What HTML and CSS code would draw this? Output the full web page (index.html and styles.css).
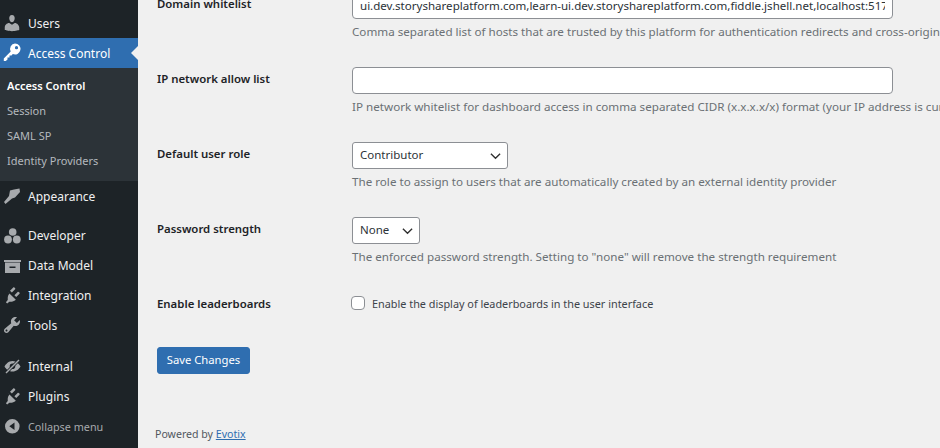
FILE: index.html
```html
<!DOCTYPE html>
<html lang="en">
<head>
<meta charset="utf-8">
<title>Access Control</title>
<link rel="stylesheet" href="styles.css">
</head>
<body>
<div class="app">
  <nav class="sidebar">
    <ul class="menu">
      <li class="item"><svg class="ico" viewBox="0 0 20 20"><path d="M10 9.250c-2.270 0-2.730-3.440-2.730-3.440C7 4.020 7.820 2 9.970 2c2.160 0 2.980 2.020 2.710 3.810 0 0-.41 3.440-2.680 3.440zm0 2.570L12.720 10c2.390 0 4.520 2.330 4.520 4.530v2.490s-3.650 1.130-7.240 1.130c-3.650 0-7.240-1.130-7.240-1.130v-2.490c0-2.250 1.940-4.480 4.470-4.480z"/></svg><span>Users</span></li>
      <li class="item current"><svg class="ico" viewBox="0 0 20 20"><path fill-rule="evenodd" d="M13 .5a5.500 5.500 0 1 1-2.200 10.540L9.500 12.400H7.500v2h-2v2L3.800 18H1.800v-2.600l6.900-6.900A5.500 5.500 0 0 1 13 .5zm1.500 2.600a1.600 1.600 0 1 0 0 3.200 1.600 1.600 0 0 0 0-3.200z"/></svg><span>Access Control</span></li>
      <li class="sub">
        <a class="sub-link active">Access Control</a>
        <a class="sub-link">Session</a>
        <a class="sub-link">SAML SP</a>
        <a class="sub-link">Identity Providers</a>
      </li>
      <li class="item"><svg class="ico" viewBox="0 0 20 20"><path d="M8 4.500 12 3.500l5.500-1 .5 3.500-5 5.500-3 1-6.500 5.500L2 16l5-6z"/></svg><span>Appearance</span></li>
      <li class="sep sep-first"></li>
      <li class="item"><svg class="ico" viewBox="0 0 20 20"><circle cx="10.700" cy="7" r="3.800"/><circle cx="6" cy="14.500" r="3.900"/><circle cx="14.800" cy="14.500" r="3.900"/></svg><span>Developer</span></li>
      <li class="item"><svg class="ico" viewBox="0 0 20 20"><path fill-rule="evenodd" d="M2 5h17v2H2zM3 7.500h15V18H3zM7.500 11.500V13h6v-1.500z"/></svg><span>Data Model</span></li>
      <li class="item"><svg class="ico" viewBox="0 0 20 20"><path d="M13.110 4.360 9.870 7.600 8 5.730l3.240-3.240c.35-.34 1.050-.2 1.560.32.520.51.660 1.210.31 1.550zm-8 1.770 8.740 8.740c-1.160 1.140-2.900 1.810-4.280 1.810H7.320l-2.120 1.860-1.310-1.310 1.850-2.130v-2.240c0-1.390.670-3.130 1.810-4.290zM17.510 8.760l-3.240 3.240-1.870-1.870 3.240-3.240c.34-.35 1.040-.21 1.550.31.520.51.660 1.210.32 1.560z"/></svg><span>Integration</span></li>
      <li class="item"><svg class="ico" viewBox="0 0 20 20"><path d="M16.680 9.770c-1.340 1.340-3.300 1.670-4.950.99l-5.410 6.520c-.99.990-2.590.99-3.580 0s-.99-2.590 0-3.570l6.520-5.420c-.68-1.650-.35-3.610.99-4.950 1.280-1.280 3.120-1.620 4.720-1.060l-2.890 2.890 2.820 2.820 2.860-2.870c.53 1.590.19 3.400-1.080 4.650zM3.810 16.210c.4.390 1.030.39 1.420 0 .4-.4.400-1.030 0-1.430-.39-.39-1.020-.39-1.420 0a1.010 1.010 0 0 0 0 1.430z"/></svg><span>Tools</span></li>
      <li class="sep sep-second"></li>
      <li class="item"><svg class="ico" viewBox="0 0 20 20"><path fill-rule="evenodd" d="M10.500 5C6.500 5 4 8 2.500 10.500 4 13 6.500 15.500 10.500 15.500s6.500-2.500 8-5C17 8 14.500 5 10.500 5zm0 2.500a2.800 2.800 0 1 1 0 5.600 2.800 2.800 0 0 1 0-5.600z"/><path class="slash-gap" d="M4 17 17 4"/><path class="slash" d="M4 17 17 4"/></svg><span>Internal</span></li>
      <li class="item"><svg class="ico" viewBox="0 0 20 20"><path d="M13.110 4.360 9.870 7.600 8 5.730l3.240-3.240c.35-.34 1.050-.2 1.560.32.520.51.660 1.210.31 1.550zm-8 1.770 8.740 8.740c-1.160 1.140-2.900 1.810-4.280 1.810H7.320l-2.120 1.860-1.310-1.310 1.850-2.130v-2.240c0-1.390.670-3.130 1.810-4.290zM17.510 8.760l-3.240 3.240-1.870-1.870 3.240-3.240c.34-.35 1.040-.21 1.550.31.520.51.660 1.210.32 1.560z"/></svg><span>Plugins</span></li>
      <li class="item collapse"><svg class="ico" viewBox="0 0 20 20"><path fill-rule="evenodd" d="M10.300 3a7.300 7.300 0 1 1 0 14.600 7.300 7.300 0 0 1 0-14.600zM12.500 6.500l-5.200 3.800 5.200 3.800z"/></svg><span>Collapse menu</span></li>
    </ul>
  </nav>
  <main class="content">
    <div class="form">
      <div class="row">
        <div class="label">Domain whitelist</div>
        <div class="field">
          <input class="text" type="text" value="ui.dev.storyshareplatform.com,learn-ui.dev.storyshareplatform.com,fiddle.jshell.net,localhost:5173">
          <p class="desc">Comma separated list of hosts that are trusted by this platform for authentication redirects and cross-origin requests</p>
        </div>
      </div>
      <div class="row">
        <div class="label">IP network allow list</div>
        <div class="field">
          <input class="text" type="text">
          <p class="desc">IP network whitelist for dashboard access in comma separated CIDR (x.x.x.x/x) format (your IP address is currently 10.0.0.1)</p>
        </div>
      </div>
      <div class="row">
        <div class="label">Default user role</div>
        <div class="field">
          <select class="select role"><option>Contributor</option></select>
          <p class="desc">The role to assign to users that are automatically created by an external identity provider</p>
        </div>
      </div>
      <div class="row">
        <div class="label">Password strength</div>
        <div class="field">
          <select class="select strength"><option>None</option></select>
          <p class="desc">The enforced password strength. Setting to "none" will remove the strength requirement</p>
        </div>
      </div>
      <div class="row check-row">
        <div class="label">Enable leaderboards</div>
        <label class="field check-field"><input class="check" type="checkbox"><span>Enable the display of leaderboards in the user interface</span></label>
      </div>
      <button class="save" type="button">Save Changes</button>
    </div>
    <footer class="foot">Powered by <a class="foot-link">Evotix</a></footer>
  </main>
</div>
</body>
</html>
```

FILE: styles.css
```css
* { box-sizing: border-box; }
html, body { margin: 0; height: 448px; overflow: hidden; }
body { font-family: "Noto Sans", "Open Sans", sans-serif; font-size: 12px; background: #f0f0f0; color: #3c434a; }
.app { display: flex; height: 448px; overflow: hidden; }
.sidebar { width: 138px; flex: none; background: #1d2327; color: #f0f0f1; padding-top: 8px; }
.menu { list-style: none; margin: 0; padding: 0; }
.item { position: relative; height: 30px; display: flex; align-items: center; gap: 6px; padding-left: 2px; font-size: 12px; }
.ico { width: 20px; height: 20px; flex: none; fill: #a7aaad; }
.slash-gap { fill: none; stroke: #1d2327; stroke-width: 3; }
.slash { fill: none; stroke: #a7aaad; stroke-width: 1.500; }
.current { background: #2f6eb0; color: #fff; }
.current .ico { fill: #fff; }
.current::after { content: ""; position: absolute; right: 0; top: 8px; border: 7px solid transparent; border-right-color: #f0f0f0; border-left-width: 0; }
.sub { background: #2c3338; height: 113px; padding: 5px 0; display: flex; flex-direction: column; }
.sub-link { height: 25px; flex: none; display: flex; align-items: center; padding-left: 7px; font-size: 11px; color: #b4b9be; }
.active { color: #fff; font-weight: 600; }
.sep-first { height: 9px; }
.sep-second { height: 11px; }
.collapse { color: #a7aaad; font-size: 10.800px; }
.content { flex: 1; min-width: 0; padding: 0 0 0 19px; display: flex; flex-direction: column; }
.form { margin-top: -22px; flex: 1; }
.row { display: grid; grid-template-columns: 195px 1fr; height: 75px; }
.label { font-weight: 600; font-size: 11.400px; color: #1d2327; padding-top: 18px; line-height: 16px; white-space: nowrap; }
.field { min-width: 0; }
.text { display: block; width: 541px; height: 27px; margin-top: 14px; padding: 0 7px; border: 1px solid #8c8f94; border-radius: 4px; background: #fff; font: 11.550px "Noto Sans", sans-serif; color: #2c3338; }
.desc { margin: 4px 0 0; font-size: 11.650px; line-height: 18px; color: #6b7075; white-space: nowrap; }
.select { display: block; height: 27px; margin-top: 14px; padding: 0 24px 2px 7px; border: 1px solid #8c8f94; border-radius: 3px; font: 11.500px "Noto Sans", sans-serif; color: #2c3338; appearance: none; background: #fff url("data:image/svg+xml,%3Csvg xmlns='http://www.w3.org/2000/svg' viewBox='0 0 12 8'%3E%3Cpath d='M1 1.500 6 6.500l5-5' fill='none' stroke='%23333' stroke-width='1.500'/%3E%3C/svg%3E") no-repeat right 6px center / 11px 8px; }
.role { width: 156px; }
.strength { width: 68px; }
.check-field { display: flex; align-items: flex-start; gap: 7px; padding-top: 18px; font-size: 10.850px; line-height: 16px; color: #3c434a; }
.check { appearance: none; width: 14px; height: 14px; margin: 0 0 0 -1px; border: 1px solid #8c8f94; border-radius: 4px; background: #fff; flex: none; }
.check-row { height: 69px; }
.save { display: block; width: 93px; height: 27px; padding: 0 0 2px; border: 1px solid #2f6eb0; border-radius: 3px; background: #2f6eb0; color: #fff; font: 11.250px "Noto Sans", sans-serif; }
.foot { padding: 0 0 6px 0; margin-left: -2px; font-size: 10.600px; line-height: 16px; color: #50575e; }
.foot-link { color: #2f6eb0; text-decoration: underline; }
```
